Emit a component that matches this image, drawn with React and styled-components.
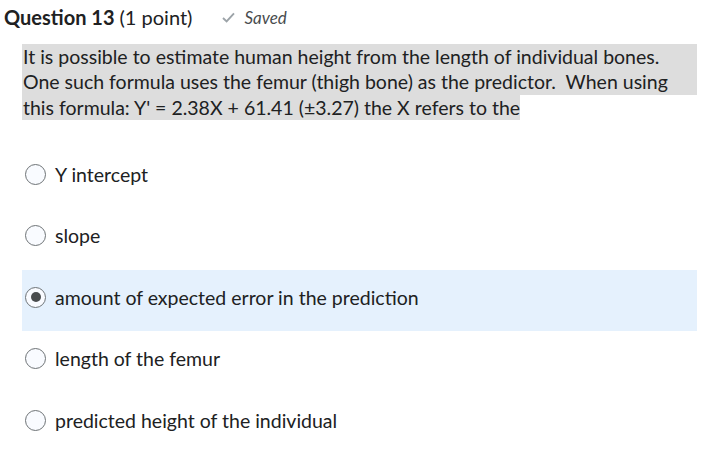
import React from "react";
import styled, { createGlobalStyle } from "styled-components";

const Global = createGlobalStyle`
  body {
    margin: 0;
    background: #fff;
    font-family: Lato, "Noto Sans", sans-serif;
    color: #202122;
  }
`;

const Page = styled.div`
  width: 705px;
  padding: 3px 8px 0 4px;
  box-sizing: border-box;
`;

const Header = styled.div`
  display: flex;
  align-items: center;
  height: 28px;
  font-size: 20px;
`;

const Title = styled.span`
  font-weight: 700;
`;

const Points = styled.span`
  margin-left: 5px;
`;

const Saved = styled.span`
  display: flex;
  align-items: center;
  margin-left: 30px;
  font-size: 17px;
  font-style: italic;
  color: #494c4e;
  svg {
    margin-right: 9px;
  }
`;

const Prompt = styled.div`
  margin: 13px 0 0 18px;
  font-size: 19.5px;
  line-height: 25.3px;
`;

const Shaded = styled.div`
  background: #dddddd;
  padding-left: 1px;
`;

const ShadedTail = styled.span`
  background: #dddddd;
  padding: 0 0 0 1px;
  display: inline-block;
`;

const Options = styled.div`
  margin: 27px 0 0 18px;
  display: flex;
  flex-direction: column;
`;

const Option = styled.label`
  display: flex;
  align-items: center;
  height: 61.5px;
  box-sizing: border-box;
  padding: 0 0 7px 3px;
  font-size: 19.5px;
  background: ${(p) => (p.$checked ? "#e5f1fd" : "transparent")};
`;

const Radio = styled.span`
  width: 19px;
  height: 19px;
  border-radius: 50%;
  border: 1px solid #6e7376;
  background: #f9fbff;
  margin-right: 9px;
  display: flex;
  align-items: center;
  justify-content: center;
  flex-shrink: 0;
  &::after {
    content: "";
    display: ${(p) => (p.$checked ? "block" : "none")};
    width: 10px;
    height: 10px;
    border-radius: 50%;
    background: #494c4e;
  }
`;

const choices = [
  "Y intercept",
  "slope",
  "amount of expected error in the prediction",
  "length of the femur",
  "predicted height of the individual",
];

export default function App() {
  return (
    <Page>
      <Global />
      <Header>
        <Title>Question 13</Title>
        <Points>(1 point)</Points>
        <Saved>
          <svg width="13" height="11" viewBox="0 0 13 11">
            <path d="M1 6 L4.6 9.4 L12 1.3" fill="none" stroke="#9ca3a8" strokeWidth="1.9" />
          </svg>
          Saved
        </Saved>
      </Header>
      <Prompt>
        <Shaded>
          It is possible to estimate human height from the length of individual bones.
          <br />
          One such formula uses the femur (thigh bone) as the predictor.&nbsp; When using
        </Shaded>
        <ShadedTail>this formula: Y' = 2.38X + 61.41 (±3.27) the X refers to the</ShadedTail>
      </Prompt>
      <Options>
        {choices.map((c, i) => (
          <Option key={c} $checked={i === 2}>
            <Radio $checked={i === 2} />
            {c}
          </Option>
        ))}
      </Options>
    </Page>
  );
}
